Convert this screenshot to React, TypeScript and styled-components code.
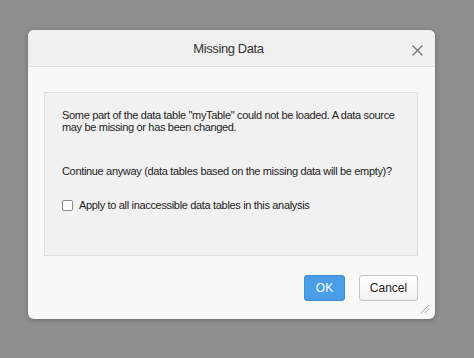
import React from "react";
import styled, { createGlobalStyle } from "styled-components";

const GlobalStyle = createGlobalStyle`
  html, body {
    margin: 0;
    padding: 0;
    background: #8e8e8e;
  }
  body {
    font-family: "Liberation Sans", Arial, sans-serif;
  }
`;

// full window overlay
const Backdrop = styled.div`
  width: 474px;
  height: 358px;
  padding: 30px 0 0 28px;
  box-sizing: border-box;
  background: #8e8e8e;
`;

const Dialog = styled.div`
  width: 407px;
  height: 289px;
  background: #f8f8f8;
  border-radius: 6px;
  overflow: hidden;
  display: flex;
  flex-direction: column;
  position: relative;
  box-shadow: 0 1px 4px rgba(0, 0, 0, 0.25);
`;

const Header = styled.div`
  height: 36px;
  flex-shrink: 0;
  background: #f0f0f0;
  border-bottom: 1px solid #dcdcdc;
  display: flex;
  align-items: center;
  justify-content: center;
  position: relative;
`;

const Title = styled.div`
  font-size: 13px;
  letter-spacing: -0.4px;
  color: #333;
  margin-right: 6px;
`;

const CloseButton = styled.button`
  position: absolute;
  right: 11px;
  top: 14px;
  width: 13px;
  height: 13px;
  padding: 0;
  border: none;
  background: transparent;
  cursor: pointer;
  display: flex;
`;

const Body = styled.div`
  flex: 1;
  padding: 25px 17px 0 16px;
  display: flex;
  flex-direction: column;
`;

const Panel = styled.div`
  height: 164px;
  box-sizing: border-box;
  background: #f1f1f1;
  border: 1px solid #dddddd;
  padding: 16px 10px 0 17px;
  font-size: 11px;
  letter-spacing: -0.33px;
  color: #222;
`;

const Paragraph = styled.p<{ gap: number }>`
  margin: 0 0 ${(p) => p.gap}px 0;
  line-height: 12px;
`;

const CheckRow = styled.label`
  display: flex;
  align-items: center;
  gap: 6px;
  line-height: 12px;
`;

const Box = styled.span`
  width: 9px;
  height: 9px;
  border: 1px solid #8a8a8a;
  border-radius: 2px;
  background: #fff;
  display: inline-block;
`;

const Footer = styled.div`
  display: flex;
  justify-content: flex-end;
  gap: 14px;
  padding: 19px 0 0 0;
`;

const Button = styled.button<{ primary?: boolean }>`
  height: 26px;
  box-sizing: border-box;
  padding: 0;
  width: ${(p) => (p.primary ? "41px" : "59px")};
  font-family: "Liberation Sans", Arial, sans-serif;
  font-size: 12px;
  border-radius: 3px;
  border: 1px solid ${(p) => (p.primary ? "#3c8fd9" : "#c6c6c6")};
  background: ${(p) => (p.primary ? "#4a9ee8" : "linear-gradient(#ffffff, #f3f3f3)")};
  color: ${(p) => (p.primary ? "#ffffff" : "#222")};
  cursor: pointer;
`;

const Grip = styled.svg`
  position: absolute;
  right: 5px;
  bottom: 5px;
`;

export default function App() {
  return (
    <>
      <GlobalStyle />
      <Backdrop>
        <Dialog>
          <Header>
            <Title>Missing Data</Title>
            <CloseButton aria-label="Close">
              <svg width="13" height="13" viewBox="0 0 13 13">
                <path d="M1.5 1.5 L11.5 11.5 M11.5 1.5 L1.5 11.5" stroke="#777" strokeWidth="1.4" />
              </svg>
            </CloseButton>
          </Header>
          <Body>
            <Panel>
              <Paragraph gap={32}>
                Some part of the data table "myTable" could not be loaded. A data source
                <br />
                may be missing or has been changed.
              </Paragraph>
              <Paragraph gap={22}>
                Continue anyway (data tables based on the missing data will be empty)?
              </Paragraph>
              <CheckRow>
                <Box />
                Apply to all inaccessible data tables in this analysis
              </CheckRow>
            </Panel>
            <Footer>
              <Button primary>OK</Button>
              <Button>Cancel</Button>
            </Footer>
          </Body>
          <Grip width="11" height="11" viewBox="0 0 11 11">
            <path d="M10 2 L2 10 M10 6 L6 10" stroke="#aaa" strokeWidth="1" />
          </Grip>
        </Dialog>
      </Backdrop>
    </>
  );
}
